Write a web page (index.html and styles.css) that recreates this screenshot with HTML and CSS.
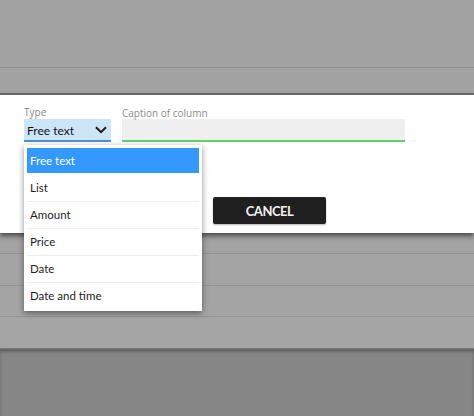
FILE: index.html
```html
<!DOCTYPE html>
<html>
<head>
<meta charset="utf-8">
<link rel="stylesheet" href="styles.css">
</head>
<body>
<div class="page">
  <div class="row row-top"></div>
  <div class="row row-head"></div>
  <div class="dialog">
    <div class="fields">
      <div class="field field-type">
        <div class="label">Type</div>
        <div class="select">
          <span>Free text</span>
          <svg class="chev" width="12" height="8" viewBox="0 0 12 8"><path d="M1 1.2 L6 6.2 L11 1.2" fill="none" stroke="#1a1a1a" stroke-width="2"/></svg>
        </div>
      </div>
      <div class="field field-caption">
        <div class="label">Caption of column</div>
        <div class="input"></div>
      </div>
    </div>
    <div class="actions">
      <button class="btn">CANCEL</button>
    </div>
  </div>
  <div class="row row-a"></div>
  <div class="row row-b"></div>
  <div class="row row-c"></div>
  <div class="row row-d"></div>
  <div class="footer"></div>

  <ul class="menu">
    <li class="item selected">Free text</li>
    <li class="item">List</li>
    <li class="item">Amount</li>
    <li class="item">Price</li>
    <li class="item">Date</li>
    <li class="item last">Date and time</li>
  </ul>
</div>
</body>
</html>
```
FILE: styles.css
```css
html, body {
  margin: 0;
  padding: 0;
}
body {
  width: 474px;
  height: 416px;
  overflow: hidden;
  background: #a2a2a2;
  font-family: "Lato", "Open Sans", sans-serif;
}
.page {
  position: relative;
  width: 474px;
  height: 416px;
  display: flex;
  flex-direction: column;
}
.row {
  background: #a2a2a2;
  flex: none;
}
.row-top {
  height: 67px;
  border-bottom: 1px solid #8e8e8e;
}
.row-head {
  height: 25px;
  border-bottom: 2px solid #6a6a6a;
}
.dialog {
  position: relative;
  z-index: 1;
  height: 138px;
  background: #ffffff;
  box-shadow: 0 3px 5px rgba(0, 0, 0, 0.55);
  box-sizing: border-box;
  padding: 11px 0 0 24px;
  flex: none;
}
.fields {
  display: flex;
  gap: 11px;
}
.label {
  font-family: "Open Sans", "Noto Sans", sans-serif;
  font-size: 10px;
  line-height: 13px;
  color: #8a8a8a;
}
.select {
  width: 87px;
  height: 23px;
  box-sizing: border-box;
  background: #cce5f7;
  border-bottom: 2px solid #4b94cf;
  display: flex;
  align-items: center;
  justify-content: space-between;
  padding: 0 3px 0 3px;
  font-size: 12px;
  color: #111;
}
.select span {
  position: relative;
  top: 1px;
}
.chev {
  margin-right: 1px;
}
.field-caption .label {
  margin-top: 1px;
  margin-bottom: -1px;
}
.input {
  width: 283px;
  height: 23px;
  box-sizing: border-box;
  background: #efefef;
  border-bottom: 2px solid #5fd36a;
}
.actions {
  margin-top: 55px;
  padding-left: 189px;
}
.btn {
  width: 113px;
  height: 27px;
  background: #1f1f1f;
  color: #f2f2f2;
  border: none;
  border-radius: 2px;
  font-family: "Lato", "Open Sans", sans-serif;
  font-size: 13px;
  font-weight: 700;
  letter-spacing: -0.5px;
  padding: 0;
  box-shadow: 0 1px 2px rgba(0,0,0,0.3);
}
.row-a {
  height: 20px;
  border-bottom: 1px solid #939393;
  background: #a3a3a3;
}
.row-b {
  height: 31px;
  border-bottom: 1px solid #959595;
  background: #a4a4a4;
}
.row-c {
  height: 30px;
  border-bottom: 1px solid #959595;
  background: #a4a4a4;
}
.row-d {
  height: 31px;
  background: #a5a5a5;
}
.footer {
  flex: 1;
  background: #868686;
  box-shadow: inset 0 3px 3px rgba(0, 0, 0, 0.25);
  border-top: 1px solid #7a7a7a;
}
.menu {
  position: absolute;
  z-index: 2;
  left: 24px;
  top: 145px;
  width: 178px;
  margin: 0;
  padding: 3px 3px 2px 3px;
  box-sizing: border-box;
  list-style: none;
  background: #ffffff;
  box-shadow: 0 2px 6px rgba(0, 0, 0, 0.45);
}
.item {
  height: 26px;
  line-height: 26px;
  border-bottom: 1px solid #ececec;
  padding-left: 3px;
  font-size: 11.5px;
  color: #1e1e1e;
}
.item.selected {
  background: #3399ff;
  color: #ffffff;
  height: 25px;
  line-height: 25px;
  border-bottom: 2px solid #ffffff;
}
.item.last {
  border-bottom: none;
}
```
